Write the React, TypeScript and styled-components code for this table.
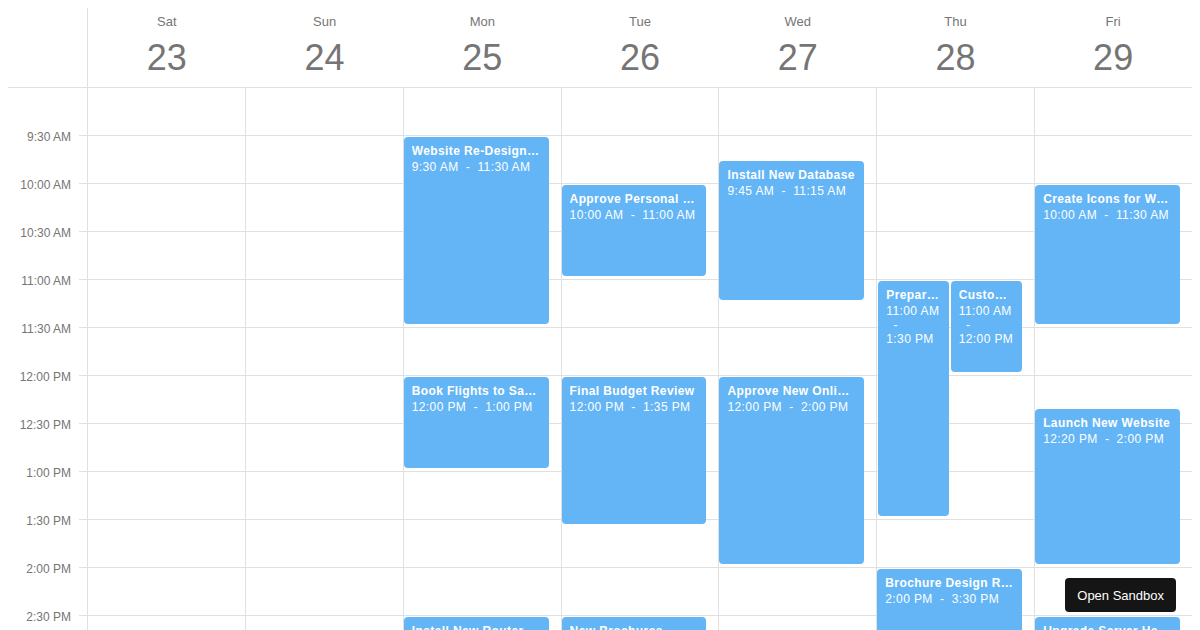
import React from 'react';
import styled, { createGlobalStyle, css } from 'styled-components';

const GlobalStyle = createGlobalStyle`
  html, body { overflow: hidden; }
  body {
    margin: 8px;
    background: #fff;
    font-family: "Liberation Sans", Arial, Helvetica, sans-serif;
  }
`;

const Paper = styled.div`
  background: #fff;
  box-shadow: 0px 2px 1px -1px rgba(0, 0, 0, 0.2), 0px 1px 1px 0px rgba(0, 0, 0, 0.14),
    0px 1px 3px 0px rgba(0, 0, 0, 0.12);
`;

const Header = styled.div`
  display: grid;
  grid-template-columns: 80px repeat(7, 1fr);
  border-bottom: 1px solid #e0e0e0;
`;

const HeaderGutter = styled.div`
  border-right: 1px solid #e0e0e0;
`;

const DayHead = styled.div`
  text-align: center;
  padding: 4px 0 7px;
  color: #757575;
`;

const DayName = styled.div`
  font-size: 13px;
  line-height: 20px;
`;

const DayNum = styled.div`
  font-size: 36px;
  line-height: 44px;
  margin-top: 4px;
`;

const Body = styled.div`
  display: grid;
  grid-template-columns: 79px repeat(7, 1fr);
`;

const Gutter = styled.div`
  display: flex;
  flex-direction: column;
`;

const GutterRow = styled.div`
  height: 48px;
  flex: none;
  display: flex;
  justify-content: flex-end;
  align-items: flex-end;
`;

const TimeLabel = styled.div`
  font-size: 12px;
  line-height: 14px;
  margin: 0 8px -8px 0;
  color: #757575;
  white-space: nowrap;
`;

const Tick = styled.div`
  width: 8px;
  height: 1px;
  background: #e0e0e0;
`;

const DayCol = styled.div`
  position: relative;
  border-left: 1px solid #e0e0e0;
  display: flex;
  flex-direction: column;
`;

const Slot = styled.div`
  height: 48px;
  flex: none;
  box-sizing: border-box;
  border-bottom: 1px solid #e0e0e0;
`;

type Lane = 'full' | 'left' | 'right';

const EventCard = styled.div<{ $lane: Lane }>`
  position: absolute;
  box-sizing: border-box;
  background: #64b5f6;
  border-radius: 4px;
  color: #fff;
  padding: 6px 8px 5px;
  overflow: hidden;
  letter-spacing: 0.4px;
  ${({ $lane }) =>
    $lane === 'full'
      ? css`
          left: 0;
          width: calc(100% - 12px);
        `
      : $lane === 'left'
      ? css`
          left: 1px;
          width: calc((100% - 16px) / 2);
        `
      : css`
          left: calc((100% - 16px) / 2 + 3px);
          width: calc((100% - 16px) / 2 + 1px);
        `}
`;

const EventTitle = styled.div`
  font-weight: 700;
  font-size: 12px;
  line-height: 17px;
  white-space: nowrap;
  overflow: hidden;
  text-overflow: ellipsis;
`;

const EventTimes = styled.div`
  font-size: 12px;
  line-height: 14px;
`;

const TimePart = styled.span`
  display: inline-block;
  white-space: nowrap;
`;

const Dash = styled.span`
  display: inline-block;
  padding: 0 3.5px;
  white-space: pre;
`;

const SandboxButton = styled.button`
  position: fixed;
  right: 24px;
  bottom: 18px;
  height: 34px;
  padding: 0 12px;
  display: flex;
  align-items: center;
  background: #151515;
  color: #fff;
  border: none;
  border-radius: 4px;
  font-family: "Liberation Sans", Arial, sans-serif;
  font-size: 13px;
  cursor: pointer;
`;

const days = [
  { name: 'Sat', num: 23 },
  { name: 'Sun', num: 24 },
  { name: 'Mon', num: 25 },
  { name: 'Tue', num: 26 },
  { name: 'Wed', num: 27 },
  { name: 'Thu', num: 28 },
  { name: 'Fri', num: 29 },
];

type Ev = { day: number; title: string; start: number; end: number; lane?: Lane };

const events: Ev[] = [
  { day: 2, title: 'Website Re-Design Plan', start: 9.5, end: 11.5 },
  { day: 2, title: 'Book Flights to San Fran for Sales Trip', start: 12, end: 13 },
  { day: 2, title: 'Install New Router in Dev Room', start: 14.5, end: 15.5 },
  { day: 3, title: 'Approve Personal Computer Upgrade Plan', start: 10, end: 11 },
  { day: 3, title: 'Final Budget Review', start: 12, end: 13 + 35 / 60 },
  { day: 3, title: 'New Brochures', start: 14.5, end: 15.75 },
  { day: 4, title: 'Install New Database', start: 9.75, end: 11.25 },
  { day: 4, title: 'Approve New Online Marketing Strategy', start: 12, end: 14 },
  { day: 5, title: 'Prepare 2021 Marketing Plan', start: 11, end: 13.5, lane: 'left' },
  { day: 5, title: 'Customer Workshop', start: 11, end: 12, lane: 'right' },
  { day: 5, title: 'Brochure Design Review', start: 14, end: 15.5 },
  { day: 6, title: 'Create Icons for Website', start: 10, end: 11.5 },
  { day: 6, title: 'Launch New Website', start: 12 + 20 / 60, end: 14 },
  { day: 6, title: 'Upgrade Server Hardware', start: 14.5, end: 16.5 },
];

const START = 9;
const SLOT_COUNT = 18;
const HOUR_PX = 96;

const fmt = (t: number) => {
  const h = Math.floor(t + 1e-6);
  const m = Math.round((t - h) * 60);
  const ampm = h >= 12 ? 'PM' : 'AM';
  const h12 = h % 12 === 0 ? 12 : h % 12;
  return `${h12}:${m.toString().padStart(2, '0')} ${ampm}`;
};

const slots = Array.from({ length: SLOT_COUNT }, (_, i) => START + i * 0.5);

export default function App() {
  return (
    <>
      <GlobalStyle />
      <Paper>
        <Header>
          <HeaderGutter />
          {days.map((d) => (
            <DayHead key={d.name}>
              <DayName>{d.name}</DayName>
              <DayNum>{d.num}</DayNum>
            </DayHead>
          ))}
        </Header>
        <Body>
          <Gutter>
            {slots.map((s) => (
              <GutterRow key={s}>
                <TimeLabel>{fmt(s + 0.5)}</TimeLabel>
                <Tick />
              </GutterRow>
            ))}
          </Gutter>
          {days.map((d, di) => (
            <DayCol key={d.name}>
              {slots.map((s) => (
                <Slot key={s} />
              ))}
              {events
                .filter((e) => e.day === di)
                .map((e) => (
                  <EventCard
                    key={e.title}
                    $lane={e.lane ?? 'full'}
                    style={{
                      top: (e.start - START) * HOUR_PX + 1,
                      height: (e.end - e.start) * HOUR_PX - 5,
                    }}
                  >
                    <EventTitle>{e.title}</EventTitle>
                    <EventTimes>
                      <TimePart>{fmt(e.start)}</TimePart>
                      <Dash>{'\u00a0-\u00a0'}</Dash>
                      <TimePart>{fmt(e.end)}</TimePart>
                    </EventTimes>
                  </EventCard>
                ))}
            </DayCol>
          ))}
        </Body>
      </Paper>
      <SandboxButton>Open Sandbox</SandboxButton>
    </>
  );
}
